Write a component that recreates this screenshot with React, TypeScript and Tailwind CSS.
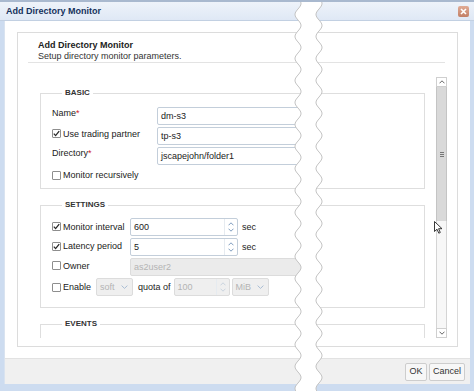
import React from "react";

const font = "[font-family:'Liberation_Sans',Arial,sans-serif]";

function Check({ on }: { on?: boolean }) {
  return (
    <span className="w-[9px] h-[9px] border border-[#8e8e8e] bg-white rounded-[1px] flex items-center justify-center shrink-0">
      {on && (
        <svg width="7" height="7" viewBox="0 0 7 7">
          <path d="M0.8 3.6 L2.6 5.6 L6.2 1.1" stroke="#2a2a2a" strokeWidth="1.3" fill="none" />
        </svg>
      )}
    </span>
  );
}

function Spin({ off }: { off?: boolean }) {
  const c = off ? "#c9d3de" : "#7f9dbf";
  return (
    <span className="w-[13px] h-full flex flex-col items-center justify-center gap-[2px] border-l border-[#e6ebf0]">
      <svg width="6" height="4" viewBox="0 0 6 4">
        <path d="M0.5 3.3 L3 0.8 L5.5 3.3" stroke={c} strokeWidth="1" fill="none" />
      </svg>
      <svg width="6" height="4" viewBox="0 0 6 4">
        <path d="M0.5 0.7 L3 3.2 L5.5 0.7" stroke={c} strokeWidth="1" fill="none" />
      </svg>
    </span>
  );
}

function Chevron() {
  return (
    <svg width="7" height="4" viewBox="0 0 7 4">
      <path d="M0.6 0.6 L3.5 3.4 L6.4 0.6" stroke="#a9bdd4" strokeWidth="1" fill="none" />
    </svg>
  );
}

function Field({ value, w }: { value: string; w: string }) {
  return (
    <div className={`${w} h-[18px] border border-[#c3ceda] rounded-[2px] bg-white flex items-center px-[3px] text-[#222]`}>
      {value}
    </div>
  );
}

function Req({ text }: { text: string }) {
  return (
    <span>
      {text}
      <span className="text-[#d0212b]">*</span>
    </span>
  );
}

function Tear() {
  const edge = (x: number) => {
    const pts: string[] = [];
    for (let y = 0; y <= 391; y += 1) {
      pts.push(`${(x + 3 * Math.sin((2 * Math.PI * (y + 4)) / 22)).toFixed(2)},${y}`);
    }
    return pts;
  };
  const l = edge(10);
  const r = edge(31);
  const fill = `M${l.join(" L")} L${[...r].reverse().join(" L")} Z`;
  return (
    <svg className="absolute top-0 left-[288px]" width="46" height="391" viewBox="0 0 46 391">
      <path d={fill} fill="#ffffff" />
      <path d={`M${l.join(" L")}`} stroke="#c4c4c4" strokeWidth="1" fill="none" />
      <path d={`M${r.join(" L")}`} stroke="#c4c4c4" strokeWidth="1" fill="none" />
    </svg>
  );
}

function Scrollbar() {
  return (
    <div className="w-[11px] flex flex-col">
      <div className="h-[10px] border border-[#cfcfcf] bg-white flex items-center justify-center">
        <svg width="6" height="4" viewBox="0 0 6 4">
          <path d="M0.5 3.3 L3 0.8 L5.5 3.3" stroke="#666" strokeWidth="1" fill="none" />
        </svg>
      </div>
      <div className="h-[134px] bg-[#d9d9d9] border-x border-[#c4c4c4] flex items-center justify-center">
        <div className="flex flex-col gap-[1px]">
          <span className="w-[4px] h-[1px] bg-[#777]" />
          <span className="w-[4px] h-[1px] bg-[#777]" />
          <span className="w-[4px] h-[1px] bg-[#777]" />
        </div>
      </div>
      <div className="flex-1 bg-[#f7f7f7] border-x border-[#d4d4d4]" />
      <div className="h-[10px] border border-[#cfcfcf] bg-white flex items-center justify-center">
        <svg width="6" height="4" viewBox="0 0 6 4">
          <path d="M0.5 0.7 L3 3.2 L5.5 0.7" stroke="#666" strokeWidth="1" fill="none" />
        </svg>
      </div>
    </div>
  );
}

export default function App() {
  return (
    <div className={`${font} relative w-[474px] h-[391px] overflow-hidden bg-[#cddcf0] border-t-2 border-[#a9b9cf] flex flex-col`}>
      <div className="h-[19px] shrink-0 bg-gradient-to-b from-[#eef3fa] to-[#dfe8f5] border-b border-[#c2d0e2] flex items-center justify-between pl-[6px] pr-[5px]">
        <span className="text-[9px] font-bold text-[#15315c] leading-none">Add Directory Monitor</span>
        <span className="w-[11px] h-[11px] rounded-[2px] bg-gradient-to-b from-[#e0ab95] to-[#c27f66] flex items-center justify-center">
          <svg width="7" height="7" viewBox="0 0 7 7">
            <path d="M1 1 L6 6 M6 1 L1 6" stroke="#fff" strokeWidth="1.6" />
          </svg>
        </span>
      </div>

      <div className="flex-1 mx-[4px] mb-[7px] bg-white border-l border-[#d9e3f0] flex flex-col">
        <div className="pt-[11px] px-[12px]">
          <div className="h-[315px] border border-[#dcdcdc] flex flex-col">
            <div className="ml-[10px] mr-[12px] pl-[10px] pt-[6px] border-b border-[#e3e3e3] text-[9px] text-[#222]">
              <div className="font-bold leading-[12px]">Add Directory Monitor</div>
              <div className="leading-[11px] text-[#333]">Setup directory monitor parameters.</div>
            </div>

            <div className="flex mt-[14px] ml-[10px] mr-[10px] h-[261px]">
              <div className="flex-1 overflow-hidden pl-[12px] pr-[11px] pt-[10px] flex flex-col gap-[10px] text-[9px] leading-[12px] text-[#222] whitespace-nowrap">
                <fieldset className="border border-[#dedede] pl-[11px] pt-[8px] pb-[5px]">
                  <legend className="ml-[10px] px-[3px] text-[8px] font-bold leading-[12px] text-[#333]">BASIC</legend>
                  <div className="flex flex-col gap-[2px]">
                    <div className="flex items-center h-[18px]">
                      <div className="w-[105px] -mt-[7px]"><Req text="Name" /></div>
                      <Field value="dm-s3" w="w-[150px]" />
                    </div>
                    <div className="flex items-center h-[18px]">
                      <div className="w-[105px] flex items-center gap-[2px] -mt-[5px]">
                        <Check on />
                        <span>Use trading partner</span>
                      </div>
                      <Field value="tp-s3" w="w-[150px]" />
                    </div>
                    <div className="flex items-center h-[18px]">
                      <div className="w-[105px] -mt-[7px]"><Req text="Directory" /></div>
                      <Field value="jscapejohn/folder1" w="w-[150px]" />
                    </div>
                    <div className="flex items-center gap-[2px] h-[16px]">
                      <Check />
                      <span>Monitor recursively</span>
                    </div>
                  </div>
                </fieldset>

                <fieldset className="border border-[#dedede] pl-[11px] pt-[7px] pb-[11px]">
                  <legend className="ml-[10px] px-[3px] text-[8px] font-bold leading-[12px] text-[#333]">SETTINGS</legend>
                  <div className="flex flex-col gap-[2px]">
                    <div className="flex items-center h-[18px]">
                      <div className="w-[78px] flex items-center gap-[2px] -mt-[1px]">
                        <Check on />
                        <span>Monitor interval</span>
                      </div>
                      <div className="w-[108px] h-[18px] border border-[#c3ceda] rounded-[2px] flex items-center justify-between pl-[3px]">
                        <span>600</span>
                        <Spin />
                      </div>
                      <span className="ml-[4px]">sec</span>
                    </div>
                    <div className="flex items-center h-[18px]">
                      <div className="w-[78px] flex items-center gap-[2px] -mt-[2px]">
                        <Check on />
                        <span>Latency period</span>
                      </div>
                      <div className="w-[108px] h-[18px] border border-[#c3ceda] rounded-[2px] flex items-center justify-between pl-[3px]">
                        <span>5</span>
                        <Spin />
                      </div>
                      <span className="ml-[4px]">sec</span>
                    </div>
                    <div className="flex items-center h-[18px]">
                      <div className="w-[78px] flex items-center gap-[2px] -mt-[3px]">
                        <Check />
                        <span>Owner</span>
                      </div>
                      <div className="w-[180px] h-[18px] border border-[#dcdcdc] bg-[#ebebeb] rounded-[2px] flex items-center pl-[3px] text-[#b4b4b4]">
                        as2user2
                      </div>
                    </div>
                    <div className="flex items-center h-[18px]">
                      <div className="flex items-center gap-[2px]">
                        <Check />
                        <span>Enable</span>
                      </div>
                      <div className="ml-[5px] w-[37px] h-[18px] border border-[#dcdcdc] bg-[#efefef] rounded-[2px] flex items-center justify-between pl-[3px] pr-[4px] text-[#b4b4b4]">
                        <span>soft</span>
                        <Chevron />
                      </div>
                      <span className="ml-[5px] mr-[3px]">quota of</span>
                      <div className="w-[56px] h-[18px] border border-[#dcdcdc] bg-[#efefef] rounded-[2px] flex items-center justify-between pl-[3px] text-[#b4b4b4]">
                        <span>100</span>
                        <Spin off />
                      </div>
                      <div className="ml-[2px] w-[37px] h-[18px] border border-[#dcdcdc] bg-[#efefef] rounded-[2px] flex items-center justify-between pl-[3px] pr-[4px] text-[#b4b4b4]">
                        <span>MiB</span>
                        <Chevron />
                      </div>
                    </div>
                  </div>
                </fieldset>

                <fieldset className="border border-[#dedede] pl-[11px] pt-[7px] pb-[30px]">
                  <legend className="ml-[10px] px-[3px] text-[8px] font-bold leading-[12px] text-[#333]">EVENTS</legend>
                </fieldset>
              </div>
              <Scrollbar />
            </div>
          </div>
        </div>

        <div className="mt-[11px] flex-1 bg-[#f0f0f0] border-t border-[#e2e2e2] flex items-center justify-end gap-[2px] pr-[5px] text-[9px] text-[#333]">
          <button className="w-[22px] h-[18px] border border-[#cdcdcd] bg-[#f7f7f7] rounded-[2px] leading-none">OK</button>
          <button className="w-[36px] h-[18px] border border-[#cdcdcd] bg-[#f7f7f7] rounded-[2px] leading-none">Cancel</button>
        </div>
      </div>

      <Tear />

      <svg className="absolute left-[434px] top-[219px]" width="9" height="13" viewBox="0 0 9 13">
        <path d="M0.5 0.5 L0.5 10.5 L3 8.2 L4.8 12.2 L6.3 11.5 L4.6 7.7 L8 7.7 Z" fill="#fff" stroke="#222" strokeWidth="0.9" />
      </svg>
    </div>
  );
}
